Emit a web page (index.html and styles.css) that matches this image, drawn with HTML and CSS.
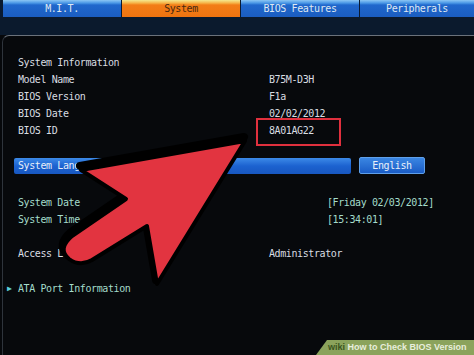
FILE: index.html
```html
<!DOCTYPE html>
<html lang="en">
<head>
  <meta charset="UTF-8" />
  <title>BIOS - System</title>
  <link rel="stylesheet" href="styles.css">
</head>
<body>
  <div class="tabs">
    <div class="tab">M.I.T.</div>
    <div class="tab active">System</div>
    <div class="tab">BIOS Features</div>
    <div class="tab">Peripherals</div>
  </div>
  <div class="subbar"></div>

  <div class="panel">
    <div class="row"><span class="label">System Information</span></div>
    <div class="row"><span class="label">Model Name</span><span class="value">B75M-D3H</span></div>
    <div class="row"><span class="label">BIOS Version</span><span class="value">F1a</span></div>
    <div class="row"><span class="label">BIOS Date</span><span class="value">02/02/2012</span></div>
    <div class="row"><span class="label">BIOS ID</span><span class="value boxed">8A01AG22</span></div>

    <div class="lang-row">
      <div class="lang-bar">System Language</div>
      <div class="lang-btn">English</div>
    </div>

    <div class="row"><span class="label teal">System Date</span><span class="value teal date">[Friday 02/03/2012]</span></div>
    <div class="row"><span class="label teal">System Time</span><span class="value teal date">[15:34:01]</span></div>

    <div class="row access"><span class="label">Access Level</span><span class="value">Administrator</span></div>

    <div class="row submenu"><span class="arrow-mark">&#9654;</span><span class="label teal">ATA Port Information</span></div>
  </div>

  <!-- annotation arrow drawn over the screen -->
  <svg class="pointer" width="474" height="355" viewBox="0 0 474 355">
    <path d="M245,141 L81,170 L126,199 L72,236 Q57,249 69,259 Q80,267 92,260 L147,226 L157,284 Z"
          fill="#000" stroke="#000" stroke-width="8" stroke-linejoin="round" transform="translate(-1,-4)"/>
    <path d="M245,141 L81,170 L126,199 L72,236 Q57,249 69,259 Q80,267 92,260 L147,226 L157,284 Z"
          fill="#e23440" stroke="#000" stroke-width="4" stroke-linejoin="round"/>
  </svg>

  <div class="wiki"><b>wiki</b> How to Check BIOS Version</div>
</body>
</html>
```

FILE: styles.css
```css
* {
  box-sizing: border-box;
  margin: 0;
  padding: 0;
}

body {
  width: 474px;
  height: 355px;
  overflow: hidden;
  position: relative;
  background-color: #06080b;
  font-family: "DejaVu Sans Mono", "Liberation Mono", monospace;
  font-size: 10px;
  letter-spacing: -0.4px;
  color: #d9dde2;
}

.tabs {
  display: flex;
  height: 17px;
  padding-left: 3px;
  background-color: #0a1a30;
}

.tab {
  width: 118px;
  margin-right: 1px;
  text-align: center;
  line-height: 18px;
  color: #dfe8f2;
  background: linear-gradient(#8cc6f4 0, #4b98e6 3px, #2067cc 5px, #1b5dc0 100%);
}

.tab:last-child {
  flex: 1;
  margin-right: 0;
}

.tab.active {
  color: #4a2810;
  background: linear-gradient(#f4e890 0, #f6b448 3px, #f27d16 5px, #ef7410 100%);
}

.subbar {
  height: 18px;
  background-color: #0b1a2d;
}

.panel {
  margin-left: 2px;
  height: 320px;
  padding: 18px 0 0 15px;
  border-top: 1px solid #6b727b;
  border-left: 1px solid #2e343c;
  border-radius: 7px 0 0 0;
  background-color: #07090c;
}

.row {
  display: flex;
  height: 17px;
  line-height: 17px;
}

.label {
  width: 251px;
  white-space: nowrap;
}

.value {
  white-space: nowrap;
}

.teal {
  color: #a4dccb;
}

.value.date {
  margin-left: 58px;
}

.boxed {
  position: relative;
}

.boxed::after {
  content: "";
  position: absolute;
  left: -13px;
  top: -4px;
  width: 81px;
  height: 24px;
  border: 2px solid #e0303e;
}

.lang-row {
  display: flex;
  align-items: center;
  margin: 18px 0 20px -4px;
  height: 17px;
}

.lang-bar {
  width: 337px;
  height: 16px;
  line-height: 16px;
  padding-left: 4px;
  color: #e6eef8;
  border-radius: 2px;
  background: linear-gradient(#3c8ae8, #1c62d0 50%, #1857c0);
}

.lang-btn {
  width: 66px;
  height: 17px;
  margin-left: 8px;
  line-height: 15px;
  text-align: center;
  color: #e8f0fa;
  border: 1px solid #5fa0ea;
  border-radius: 2px;
  background: linear-gradient(#3a86e2, #1a5cc6);
}

.row.access {
  margin-top: 17px;
}

.row.submenu {
  margin-left: -11px;
  margin-top: 18px;
}

.arrow-mark {
  width: 11px;
  font-size: 8px;
  color: #5ecfd8;
}

.pointer {
  position: absolute;
  left: 0;
  top: 0;
}

.wiki {
  position: absolute;
  right: 0;
  bottom: 0;
  width: 158px;
  height: 15px;
  padding-left: 12px;
  line-height: 15px;
  white-space: nowrap;
  font-family: "Liberation Sans", Arial, sans-serif;
  font-size: 9px;
  font-weight: bold;
  letter-spacing: 0;
  color: #e8eedc;
  background-color: #8ba35c;
  clip-path: polygon(11px 0, 100% 0, 100% 100%, 0 100%);
}

.wiki b {
  color: #3b5520;
}
```
